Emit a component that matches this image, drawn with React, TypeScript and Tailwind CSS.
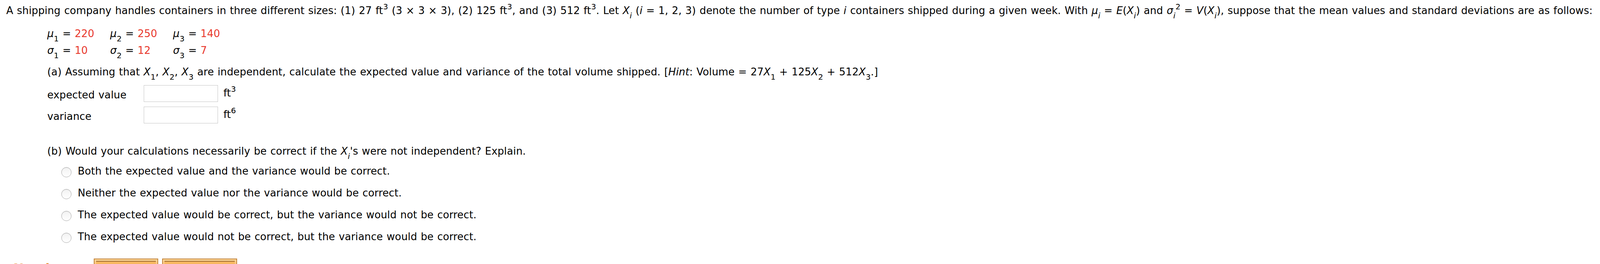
import React from "react"

const subCls = "text-[20px] -bottom-[11px]"
const supCls = "text-[20px] -top-[12px]"

function Sub({ children }: { children: React.ReactNode }) {
  return <sub className={subCls}>{children}</sub>
}

function Sup({ children }: { children: React.ReactNode }) {
  return <sup className={supCls}>{children}</sup>
}

function Red({ children }: { children: React.ReactNode }) {
  return <span className="text-[#e8372c]">{children}</span>
}

const stats = [
  [
    { sym: "μ", idx: "1", val: "220" },
    { sym: "μ", idx: "2", val: "250" },
    { sym: "μ", idx: "3", val: "140" },
  ],
  [
    { sym: "σ", idx: "1", val: "10" },
    { sym: "σ", idx: "2", val: "12" },
    { sym: "σ", idx: "3", val: "7" },
  ],
]

const choices = [
  "Both the expected value and the variance would be correct.",
  "Neither the expected value nor the variance would be correct.",
  "The expected value would be correct, but the variance would not be correct.",
  "The expected value would not be correct, but the variance would be correct.",
]

function Radio() {
  return (
    <div className="mt-[6px] h-[26px] w-[26px] shrink-0 rounded-full border border-[#a8a8a8] bg-gradient-to-b from-[#f2f2f2] to-[#ffffff] shadow-[inset_0_1px_1px_rgba(0,0,0,0.08)]" />
  )
}

export default function App() {
  return (
    <main
      className="min-h-screen bg-white pl-[16px] pt-[11px] text-[26px] leading-[32px] tracking-[0.15px] text-black [word-spacing:1px]"
      style={{ fontFamily: '"DejaVu Sans", Verdana, sans-serif' }}
    >
      <p className="whitespace-nowrap">
        A shipping company handles containers in three different sizes: (1) 27 ft<Sup>3</Sup> (3 × 3 × 3), (2) 125 ft
        <Sup>3</Sup>, and (3) 512 ft<Sup>3</Sup>. Let <i>X</i>
        <Sub>
          <i>i</i>
        </Sub>{" "}
        (<i>i</i> = 1, 2, 3) denote the number of type <i>i</i> containers shipped during a given week. With <i>μ</i>
        <Sub>
          <i>i</i>
        </Sub>{" "}
        = <i>E</i>(<i>X</i>
        <Sub>
          <i>i</i>
        </Sub>
        ) and <i>σ</i>
        <Sub>
          <i>i</i>
        </Sub>
        <Sup>2</Sup> = <i>V</i>(<i>X</i>
        <Sub>
          <i>i</i>
        </Sub>
        ), suppose that the mean values and standard deviations are as follows:
      </p>

      <div className="ml-[105px]">
        <div className="mt-[27px] flex flex-col gap-[11px]">
          {stats.map((row, r) => (
            <div key={r} className="grid grid-cols-[161px_161px_160px]">
              {row.map((s) => (
                <div key={s.sym + s.idx} className="whitespace-nowrap">
                  <i>{s.sym}</i>
                  <Sub>{s.idx}</Sub> = <Red>{s.val}</Red>
                </div>
              ))}
            </div>
          ))}
        </div>

        <p className="mt-[23px] whitespace-nowrap">
          (a) Assuming that <i>X</i>
          <Sub>1</Sub>, <i>X</i>
          <Sub>2</Sub>, <i>X</i>
          <Sub>3</Sub> are independent, calculate the expected value and variance of the total volume shipped. [
          <i>Hint</i>: Volume = 27<i>X</i>
          <Sub>1</Sub> + 125<i>X</i>
          <Sub>2</Sub> + 512<i>X</i>
          <Sub>3</Sub>.]
        </p>

        <div className="mt-[18px] flex flex-col gap-[12px]">
          {[
            { label: "expected value", unit: "3" },
            { label: "variance", unit: "6" },
          ].map((f) => (
            <div key={f.label} className="flex items-start">
              <div className="w-[247px] pt-[9px]">{f.label}</div>
              <input className="h-[43px] w-[190px] border border-[#c4c4c4] bg-white outline-none" />
              <div className="ml-[14px] pt-[4px]">
                ft<Sup>{f.unit}</Sup>
              </div>
            </div>
          ))}
        </div>

        <p className="mt-[55px] whitespace-nowrap">
          (b) Would your calculations necessarily be correct if the <i>X</i>
          <Sub>
            <i>i</i>
          </Sub>
          's were not independent? Explain.
        </p>

        <div className="mt-[19px] ml-[36px] flex flex-col gap-[24px]">
          {choices.map((c) => (
            <label key={c} className="flex h-[32px] items-start gap-[16px] whitespace-nowrap">
              <Radio />
              <span>{c}</span>
            </label>
          ))}
        </div>
      </div>

      <div className="mt-[40px] flex items-start">
        <div className="ml-[18px] mt-[5px] w-[206px] text-[32px] font-bold leading-[40px] tracking-normal text-[#e8892d]">
          Need Help?
        </div>
        <div className="flex gap-[10px]">
          {["Read It", "Talk to a Tutor"].map((b, i) => (
            <div
              key={b}
              className={`h-[44px] border-2 border-[#c2843c] bg-gradient-to-b from-[#fcd596] to-[#f3a342] p-[4px] ${
                i === 0 ? "w-[165px]" : "w-[192px]"
              }`}
            >
              <div className="h-full border-t-2 border-[#9b6a34] bg-[#f7b860] text-center text-[22px] font-bold leading-[30px] tracking-normal text-[#222]">
                {b}
              </div>
            </div>
          ))}
        </div>
      </div>
    </main>
  )
}
